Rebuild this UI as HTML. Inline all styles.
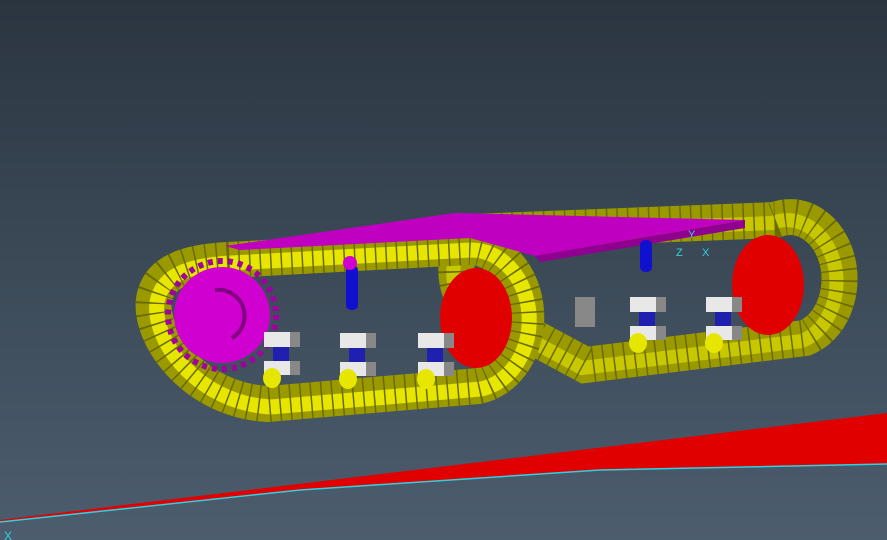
<!DOCTYPE html>
<html><head><meta charset="utf-8"><style>
html,body{margin:0;padding:0;width:887px;height:540px;overflow:hidden;background:linear-gradient(#2a3540,#3c4a58 50%,#4c5d6e);}
svg{position:absolute;left:0;top:0}
</style></head><body>
<svg width="887" height="540" viewBox="0 0 887 540">
<defs>
<g id="s">
<rect x="0" y="0" width="26" height="15" fill="#e8e8e8"/><rect x="26" y="0" width="10" height="15" fill="#888"/>
<rect x="9" y="15" width="16" height="14" fill="#2020b0"/>
<rect x="0" y="29" width="26" height="14" fill="#e8e8e8"/><rect x="26" y="29" width="10" height="14" fill="#888"/>
<ellipse cx="8" cy="46" rx="9" ry="10" fill="#e6e600"/>
</g>
<path id="rt" d="M470,232 L775,220 A48,60 0 0 1 805,338 L585,365 L520,330 A60,60 0 0 1 470,232 Z" fill="none"/>
<path id="lt" d="M228,260 L468,247 A58,70 0 0 1 478,386 L268,404 C190,400 145,330 155,295 C162,270 190,262 228,260 Z" fill="none"/>
</defs>
<!-- ground wedge -->
<polygon points="0,520 887,413 887,464 600,470 300,490 0,522" fill="#e00000"/>
<polyline points="0,522 300,490 600,470 887,464" fill="none" stroke="#30d0e0" stroke-width="1.5"/>
<text x="4" y="540" fill="#30d0e0" font-family="Liberation Sans,sans-serif" font-size="12">X</text>

<!-- right track -->
<use href="#rt" stroke="#9a9a00" stroke-width="36"/>
<use href="#rt" stroke="#c8c800" stroke-width="14" transform="translate(-3,3)"/>
<use href="#rt" stroke="#6a6a00" stroke-width="36" stroke-dasharray="1.5 9"/>

<!-- left track -->
<use href="#lt" stroke="#9a9a00" stroke-width="36"/>
<use href="#lt" stroke="#e6e600" stroke-width="15" transform="translate(3,3)"/>
<use href="#lt" stroke="#6a6a00" stroke-width="36" stroke-dasharray="1.5 9"/>

<!-- magenta plate -->
<polygon points="225,246 455,213 745,220 535,256 470,238 240,250" fill="#c000c0"/>
<polygon points="535,256 745,220 745,228 540,262" fill="#900090"/>

<!-- sprocket -->
<circle cx="222" cy="315" r="54" fill="none" stroke="#a000a0" stroke-width="6" stroke-dasharray="5 5"/>
<circle cx="222" cy="315" r="48" fill="#d000d0"/>
<path d="M215,290 A26,26 0 0 1 232,338" fill="none" stroke="#800080" stroke-width="4"/>

<!-- red idler wheels -->
<ellipse cx="476" cy="318" rx="36" ry="50" fill="#e00000"/>
<ellipse cx="768" cy="285" rx="36" ry="50" fill="#e00000"/>

<!-- blue posts -->
<rect x="346" y="265" width="12" height="45" rx="5" fill="#1010d0"/>
<circle cx="350" cy="263" r="7" fill="#d000d0"/>
<rect x="640" y="240" width="12" height="32" rx="5" fill="#1010d0"/>

<use href="#s" x="264" y="332"/>
<use href="#s" x="340" y="333"/>
<use href="#s" x="418" y="333"/>
<use href="#s" x="630" y="297"/>
<use href="#s" x="706" y="297"/>
<rect x="575" y="297" width="20" height="30" fill="#888"/>

<text x="688" y="238" fill="#30d0e0" font-family="Liberation Sans,sans-serif" font-size="11">Y</text>
<text x="676" y="256" fill="#30d0e0" font-family="Liberation Sans,sans-serif" font-size="11">Z</text>
<text x="702" y="256" fill="#30d0e0" font-family="Liberation Sans,sans-serif" font-size="11">X</text>
</svg>
</body></html>
